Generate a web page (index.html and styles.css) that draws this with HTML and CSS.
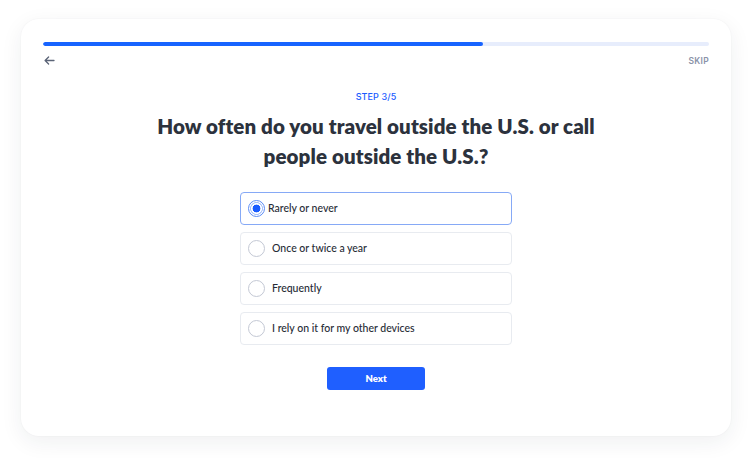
FILE: index.html
```html
<!DOCTYPE html>
<html lang="en">
<head>
<meta charset="utf-8">
<title>Step 3/5</title>
<link rel="stylesheet" href="styles.css">
</head>
<body>
<main class="card">
  <div class="progress"><div class="progress-fill" style="width: 66%"></div></div>
  <div class="topnav">
    <button class="back" aria-label="Back">
      <svg width="11" height="9" viewBox="0 0 11 9" fill="none" stroke="#5b6477" stroke-width="1.3" stroke-linecap="round" stroke-linejoin="round"><path d="M10 4.5H1.2M4.6 1L1.1 4.5L4.6 8"/></svg>
    </button>
    <span class="skip">SKIP</span>
  </div>
  <div class="step">STEP 3/5</div>
  <h1 class="question">How often do you travel outside the U.S. or call<br>people outside the U.S.?</h1>
  <ul class="options">
    <li class="option selected"><span class="radio"></span><span class="label">Rarely or never</span></li>
    <li class="option"><span class="radio"></span><span class="label">Once or twice a year</span></li>
    <li class="option"><span class="radio"></span><span class="label">Frequently</span></li>
    <li class="option"><span class="radio"></span><span class="label">I rely on it for my other devices</span></li>
  </ul>
  <button class="next">Next</button>
</main>
</body>
</html>
```

FILE: styles.css
```css
* { box-sizing: border-box; }

html, body {
  margin: 0;
  background: #ffffff;
}

body {
  padding: 19px 21px 22px;
  font-family: "Lato", "Inter", sans-serif;
  color: #2c323d;
}

.card {
  height: 417px;
  background: #ffffff;
  border-radius: 18px;
  box-shadow: 0 6px 22px rgba(30, 40, 60, 0.07), 0 0 2px rgba(30, 40, 60, 0.05);
  padding: 23px 22px 0;
  display: flex;
  flex-direction: column;
  align-items: center;
}

.progress {
  width: 100%;
  height: 3.5px;
  border-radius: 2px;
  background: #e7edfc;
  overflow: hidden;
}

.progress-fill {
  height: 100%;
  background: #1764ff;
  border-radius: 2px;
}

.topnav {
  width: 100%;
  display: flex;
  justify-content: space-between;
  align-items: center;
  margin-top: 9px;
  height: 12px;
}

.back {
  border: 0;
  background: none;
  padding: 0;
  margin-left: 1px;
  display: flex;
}

.skip {
  font-family: "Inter", sans-serif;
  font-size: 8.5px;
  font-weight: 600;
  letter-spacing: 0.3px;
  color: #8a93a9;
}

.step {
  margin-top: 24px;
  font-family: "Inter", sans-serif;
  font-size: 9px;
  font-weight: 500;
  color: #1a5cff;
  letter-spacing: 0.1px;
}

.question {
  margin: 9px 0 0;
  font-size: 20.5px;
  line-height: 30px;
  font-weight: 800;
  text-align: center;
  color: #2c323d;
  letter-spacing: 0.1px;
}

.options {
  list-style: none;
  margin: 21px 0 0;
  padding: 0;
  width: 272px;
  display: flex;
  flex-direction: column;
  gap: 7px;
}

.option {
  height: 33px;
  border: 1px solid #e8ebf0;
  border-radius: 4px;
  display: flex;
  align-items: center;
  padding-left: 7px;
  font-size: 10.5px;
  font-weight: 500;
  color: #262b35;
}

.option.selected {
  border-color: #86a9f6;
}

.radio {
  width: 17px;
  height: 17px;
  border-radius: 50%;
  border: 1px solid #c3c8d4;
  margin-right: 7px;
  flex: none;
}

.option.selected .radio {
  border: 1.5px solid #5b8cf6;
  background: radial-gradient(circle, #1a5cff 0 3.6px, #ffffff 4.2px 5.2px, #a9c3fb 5.6px 6.2px, #ffffff 6.6px);
  margin-right: 3px;
}

.next {
  margin-top: 22px;
  width: 98px;
  height: 23px;
  border: 0;
  border-radius: 3px;
  background: #1f5fff;
  color: #ffffff;
  font-family: "Lato", sans-serif;
  font-size: 9.5px;
  font-weight: 800;
}
```
